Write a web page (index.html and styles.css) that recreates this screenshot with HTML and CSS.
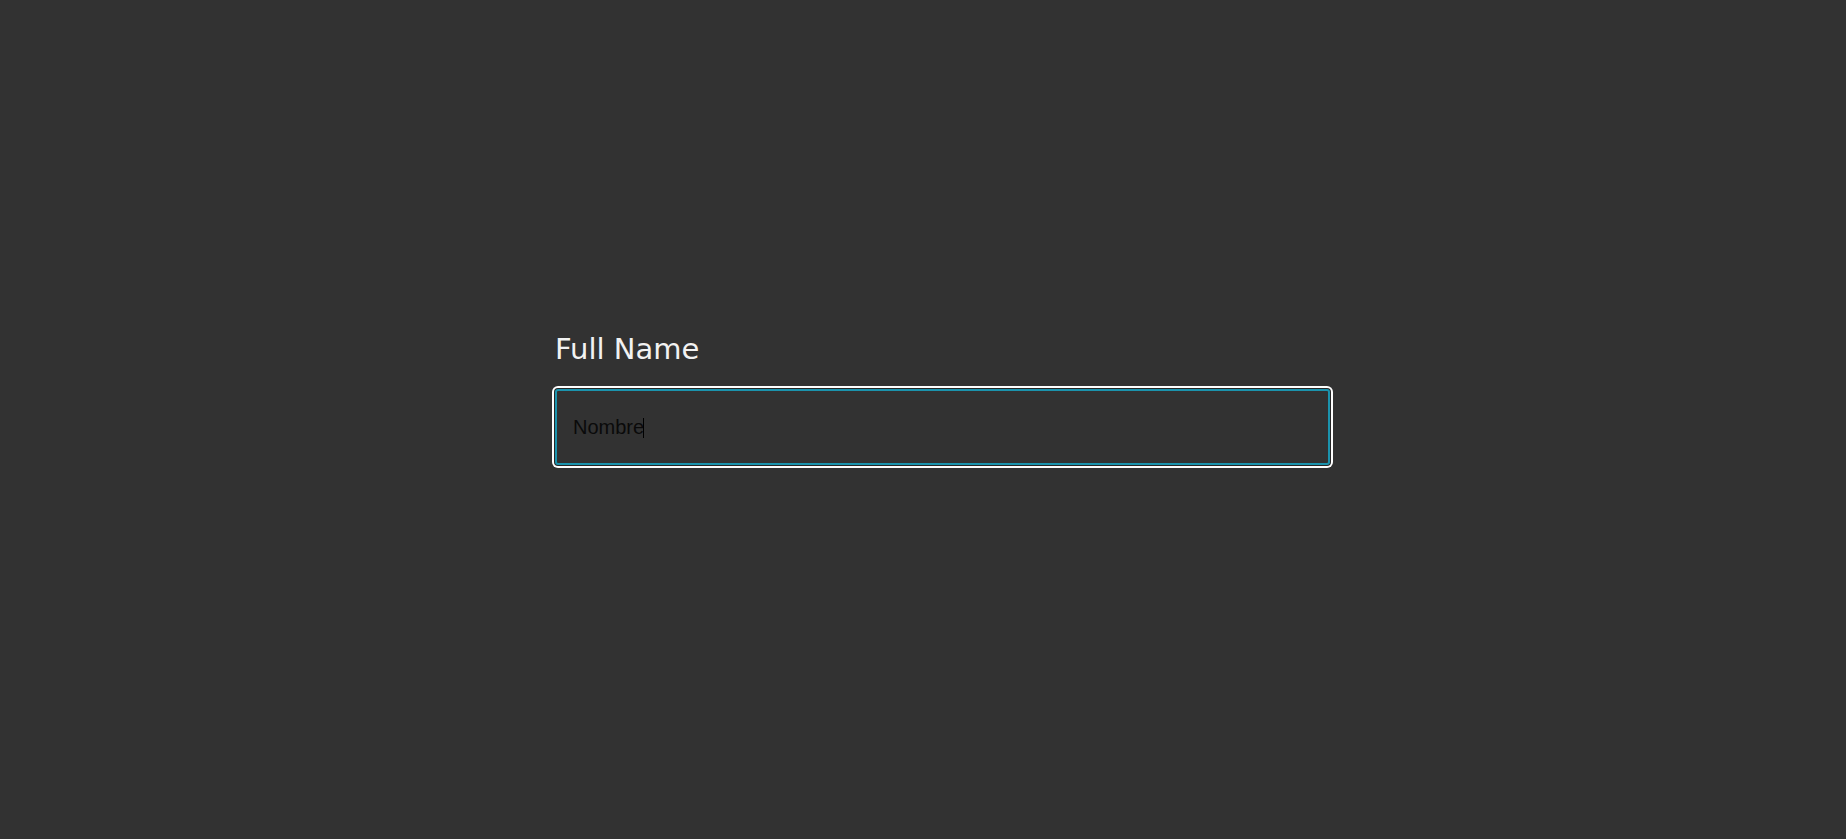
FILE: index.html
```html
<!DOCTYPE html>
<html lang="en">
<head>
<meta charset="utf-8">
<title>Full Name</title>
<link rel="stylesheet" href="styles.css">
</head>
<body>
<main class="page">
  <form class="field">
    <label class="field-label" for="name">Full Name</label>
    <div class="input-wrap">
      <input class="field-input" id="name" type="text" value="Nombre">
      <span class="caret"></span>
    </div>
  </form>
</main>
</body>
</html>
```

FILE: styles.css
```css
html, body {
  margin: 0;
  padding: 0;
  background: #323232;
}
.page {
  min-height: 839px;
  box-sizing: border-box;
  padding: 332px 0 0 555px;
}
.field {
  display: flex;
  flex-direction: column;
  width: 775px;
  margin: 0;
}
.field-label {
  font-family: "DejaVu Sans", sans-serif;
  font-size: 29px;
  line-height: 34px;
  color: #f2f2f2;
  margin: 0 0 23px 0;
}
.input-wrap {
  position: relative;
  width: 775px;
  height: 76px;
}
.field-input {
  box-sizing: border-box;
  width: 775px;
  height: 76px;
  margin: 0;
  padding: 0 16px;
  border: 2px solid #1b93ad;
  border-radius: 3px;
  background: #323232;
  color: #0a0a0a;
  caret-color: transparent;
  font-family: "Liberation Sans", Arial, sans-serif;
  font-size: 20px;
  outline: none;
  box-shadow: 0 0 0 1px #262626, 0 0 0 3px #ffffff;
}
.caret {
  position: absolute;
  left: 88px;
  top: 29px;
  width: 1px;
  height: 20px;
  background: #000;
}
```
